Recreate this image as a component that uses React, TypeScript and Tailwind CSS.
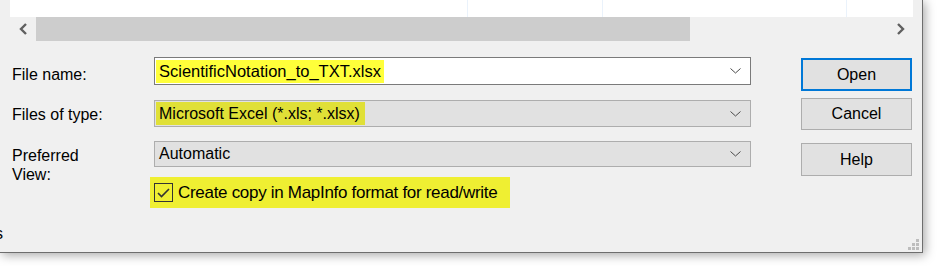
import React from 'react';

const Chevron = ({ dir }: { dir: 'left' | 'right' }) => (
  <svg width="9" height="12" viewBox="0 0 9 12">
    <polyline
      points={dir === 'left' ? '7,1 2,6 7,11' : '2,1 7,6 2,11'}
      fill="none"
      stroke="#606060"
      strokeWidth="2.4"
    />
  </svg>
);

const ComboArrow = () => (
  <svg width="11" height="6" viewBox="0 0 11 6" className="shrink-0">
    <polyline points="0.5,0.5 5.5,5 10.5,0.5" fill="none" stroke="#4a4a4a" strokeWidth="1" />
  </svg>
);

const Combo = ({
  children,
  editable,
  height,
}: {
  children: React.ReactNode;
  editable?: boolean;
  height: string;
}) => (
  <div
    className={`w-[597px] ${height} flex items-center pl-[1px] pr-[9px] border ${
      editable ? 'bg-white border-[#7a7a7a]' : 'bg-[#e1e1e1] border-[#adadad]'
    }`}
  >
    <div className="flex-1 flex items-center">{children}</div>
    <ComboArrow />
  </div>
);

const Button = ({ label, primary, className }: { label: string; primary?: boolean; className: string }) => (
  <div
    className={`w-[111px] flex items-center justify-center bg-[#e1e1e1] text-[16px] text-black ${
      primary ? 'border-2 border-[#0078d7]' : 'border border-[#adadad]'
    } ${className}`}
  >
    {label}
  </div>
);

export default function App() {
  return (
    <div className="w-[945px] h-[266px] bg-white overflow-hidden font-['Liberation_Sans',Arial,sans-serif] text-black">
      <div className="relative w-[923px] h-[253px] bg-[#f0f0f0] border-r border-b border-[#6e6e6e] shadow-[2px_2px_10px_rgba(0,0,0,0.35)] flex flex-col">
        {/* File list, scrolled */}
        <div className="ml-[10px] w-[903px] h-[17px] bg-white flex">
          <div className="w-[458px] border-r border-[#eaf2fb]" />
          <div className="w-[135px] border-r border-[#eaf2fb]" />
          <div className="w-[244px] border-r border-[#eaf2fb]" />
        </div>

        {/* Horizontal scrollbar */}
        <div className="ml-[10px] w-[903px] h-[24px] flex items-center">
          <div className="w-[26px] flex justify-center">
            <Chevron dir="left" />
          </div>
          <div className="w-[654px] h-full bg-[#cdcdcd]" />
          <div className="flex-1" />
          <div className="w-[26px] flex justify-center">
            <Chevron dir="right" />
          </div>
        </div>

        {/* Form */}
        <div className="flex">
          <div className="ml-[12px] flex flex-col">
            <div className="mt-[16px] h-[28px] flex items-start">
              <div className="w-[142px] pt-[9px] text-[16px] leading-[18px]">File name:</div>
              <Combo editable height="h-[28px]">
                <span className="bg-[#ffff3a] pl-[3px] pr-[3px] h-[23px] flex items-center text-[16.5px]">
                  ScientificNotation_to_TXT.xlsx
                </span>
              </Combo>
            </div>

            <div className="mt-[15px] h-[27px] flex items-start">
              <div className="w-[142px] pt-[6px] text-[16px] leading-[18px]">Files of type:</div>
              <Combo height="h-[27px]">
                <span className="bg-[#e0e037] pl-[3px] pr-[5px] h-[23px] flex items-center text-[16px]">
                  Microsoft Excel (*.xls; *.xlsx)
                </span>
              </Combo>
            </div>

            <div className="mt-[14px] h-[26px] flex items-start">
              <div className="w-[142px] pt-[5px] text-[16px] leading-[19px]">
                Preferred
                <br />
                View:
              </div>
              <Combo height="h-[26px]">
                <span className="pl-[3px] text-[16px] leading-[18px]">Automatic</span>
              </Combo>
            </div>

            <div className="mt-[10px] ml-[138px] w-[360px] h-[31px] bg-[#efef32] flex items-center pl-[4px]">
              <div className="w-[19px] h-[19px] border border-[#333333] flex items-center justify-center">
                <svg width="13" height="10" viewBox="0 0 13 10">
                  <polyline points="1,5 4.5,8.5 12,1" fill="none" stroke="#333333" strokeWidth="1.6" />
                </svg>
              </div>
              <span className="ml-[5px] text-[17px] leading-[20px] tracking-[-0.3px]">
                Create copy in MapInfo format for read/write
              </span>
            </div>

            <div className="mt-[18px] -ml-[17px] text-[16px] leading-[16px]">s</div>
          </div>

          {/* Buttons */}
          <div className="ml-[50px] flex flex-col">
            <Button label="Open" primary className="mt-[17px] h-[33px]" />
            <Button label="Cancel" className="mt-[7px] h-[32px]" />
            <Button label="Help" className="mt-[13px] h-[33px]" />
          </div>
        </div>

        {/* Resize grip */}
        <div className="absolute right-[3px] bottom-[2px] flex flex-col items-end gap-[1px]">
          <div className="flex gap-[1px]">
            <div className="w-[3px] h-[3px] bg-[#bdbdbd]" />
          </div>
          <div className="flex gap-[1px]">
            <div className="w-[3px] h-[3px] bg-[#bdbdbd]" />
            <div className="w-[3px] h-[3px] bg-[#bdbdbd]" />
          </div>
          <div className="flex gap-[1px]">
            <div className="w-[3px] h-[3px] bg-[#bdbdbd]" />
            <div className="w-[3px] h-[3px] bg-[#bdbdbd]" />
            <div className="w-[3px] h-[3px] bg-[#bdbdbd]" />
          </div>
        </div>
      </div>
    </div>
  );
}
